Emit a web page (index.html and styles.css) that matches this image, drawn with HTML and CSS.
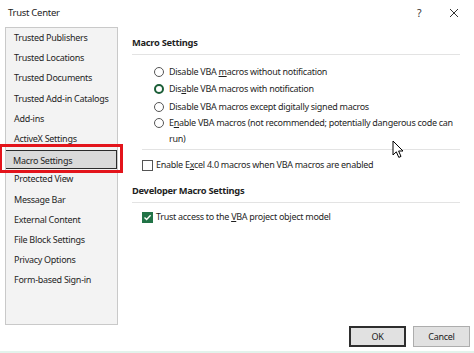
FILE: index.html
```html
<!DOCTYPE html>
<html lang="en">
<head>
    <meta charset="UTF-8">
    <title>Trust Center</title>
    <link rel="stylesheet" href="styles.css">
</head>
<body>
    <div class="window">
        <div class="titlebar">
            <span class="title">Trust Center</span>
            <span class="help">?</span>
            <svg class="close" width="10" height="10" viewBox="0 0 10 10">
                <path d="M1 1 L9 9 M9 1 L1 9" stroke="#333" stroke-width="1"/>
            </svg>
        </div>

        <div class="main">
            <ul class="sidebar">
                <li>Trusted Publishers</li>
                <li>Trusted Locations</li>
                <li>Trusted Documents</li>
                <li>Trusted Add-in Catalogs</li>
                <li>Add-ins</li>
                <li>ActiveX Settings</li>
                <li class="selected">Macro Settings</li>
                <li>Protected View</li>
                <li>Message Bar</li>
                <li>External Content</li>
                <li>File Block Settings</li>
                <li>Privacy Options</li>
                <li>Form-based Sign-in</li>
            </ul>

            <div class="content">
                <h2 class="section-title">Macro Settings</h2>
                <div class="options">
                    <div class="radio-row"><span class="radio"></span><span class="label">Disable VBA <u>m</u>acros without notification</span></div>
                    <div class="radio-row"><span class="radio checked"></span><span class="label">Dis<u>a</u>ble VBA macros with notification</span></div>
                    <div class="radio-row"><span class="radio"></span><span class="label">Disable VBA macros except digitally signed macros</span></div>
                    <div class="radio-row"><span class="radio"></span><span class="label">E<u>n</u>able VBA macros (not recommended; potentially dangerous code can <span>run)</span></span></div>
                </div>
                <div class="check-block">
                    <div class="check-row"><span class="checkbox"></span><span>Enable E<u>x</u>cel 4.0 macros when VBA macros are enabled</span></div>
                </div>
                <h2 class="section-title">Developer Macro Settings</h2>
                <div class="check-block last">
                    <div class="check-row">
                        <span class="checkbox checked">
                            <svg width="9" height="9" viewBox="0 0 9 9"><path d="M1.5 4.6 L3.6 6.6 L7.6 2.3" fill="none" stroke="#fff" stroke-width="1.4"/></svg>
                        </span>
                        <span>Trust access to the <u>V</u>BA project object model</span>
                    </div>
                </div>
            </div>
        </div>

        <div class="footer">
            <button class="btn default">OK</button>
            <button class="btn">Cancel</button>
        </div>

        <!-- mouse pointer in the screenshot -->
        <svg class="cursor" width="13" height="19" viewBox="0 0 13 19">
            <path d="M1 1 L1 15 L4.3 11.8 L6.8 17.4 L9 16.4 L6.6 11 L11 11 Z" fill="#fff" stroke="#000" stroke-width="1" stroke-linejoin="round"/>
        </svg>
    </div>
</body>
</html>
```

FILE: styles.css
```css
/* Global */
body {
    margin: 0;
    font-family: "Segoe UI", "Noto Sans", sans-serif;
    font-size: 9px;
    letter-spacing: -0.28px;
    color: #1f1f1f;
    background: #fff;
}

.window {
    position: relative;
    width: 474px;
    height: 353px;
    box-sizing: border-box;
    border-bottom: 2px solid #e3f3ec;
    display: flex;
    flex-direction: column;
}

/* Title bar */
.titlebar {
    height: 25px;
    display: flex;
    align-items: center;
    padding: 0 0 0 8px;
}

.title {
    flex: 1;
    font-size: 9.5px;
    color: #222;
}

.help {
    width: 8px;
    margin-right: 24px;
    font-size: 10.5px;
    color: #333;
}

.close {
    margin-right: 15px;
}

/* Main area */
.main {
    height: 300px;
    display: flex;
}

.sidebar {
    list-style: none;
    margin: 2px 0 0 5px;
    padding: 0;
    width: 111px;
    height: 296px;
    border: 1px solid #c9c9c9;
    background: #f3f3f3;
}

.sidebar li {
    height: 20.2px;
    line-height: 20px;
    padding-left: 8px;
    white-space: nowrap;
}

.sidebar li.selected {
    position: relative;
    margin-top: 1px;
    height: 19px;
    line-height: 19px;
    padding-left: 7px;
    background: #dadada;
    border: 1px solid #2b2b2b;
    border-left: 0;
    margin-bottom: 0.2px;
    box-sizing: border-box;
}

/* red highlight drawn over the selected entry */
.sidebar li.selected::after {
    content: "";
    position: absolute;
    top: -7px;
    left: -7px;
    right: -7px;
    bottom: -5px;
    border: 3px solid #e3141b;
}

.content {
    flex: 1;
    margin-left: 14px;
    margin-right: 14px;
}

.section-title {
    margin: 0;
    font-size: 9.3px;
    font-weight: bold;
    height: 29px;
    line-height: 36px;
    border-bottom: 1px solid #e3e3e3;
}

.options {
    padding: 8px 0 2px 22px;
}

.radio-row {
    display: flex;
    align-items: flex-start;
    line-height: 17px;
    margin-bottom: 0.3px;
}

.radio-row .label {
    width: 290px;
}

.radio-row:last-child {
    line-height: 16px;
}

.radio {
    flex: none;
    width: 8px;
    height: 8px;
    margin: 4px 5px 0 0;
    border: 1px solid #555;
    border-radius: 50%;
    background: #fff;
}

.radio.checked {
    width: 6px;
    height: 6px;
    border: 2px solid #1b5e37;
}

.radio-row:last-child .radio {
    margin-top: 3.5px;
}

.check-block {
    margin-left: 10px;
    border-top: 1px solid #e3e3e3;
    padding: 7px 0 0;
}

.check-block.last {
    border-top: 0;
    padding-top: 6px;
}

.check-row {
    display: flex;
    align-items: center;
    line-height: 16px;
}

.checkbox {
    flex: none;
    width: 9px;
    height: 9px;
    margin-right: 3px;
    border: 1px solid #555;
    background: #fff;
    display: flex;
    align-items: center;
    justify-content: center;
}

.checkbox.checked {
    background: #217346;
    border-color: #217346;
}

/* Footer */
.footer {
    display: flex;
    justify-content: flex-end;
    gap: 7px;
    padding: 1px 4px 0 0;
}

.btn {
    width: 57px;
    height: 21px;
    font-family: inherit;
    font-size: 9px;
    letter-spacing: inherit;
    color: #222;
    background: #e1e1e1;
    border: 1px solid #adadad;
    padding: 0;
}

.btn.default {
    border: 2px solid #2e2e2e;
}

.cursor {
    position: absolute;
    left: 392px;
    top: 140px;
}
```
